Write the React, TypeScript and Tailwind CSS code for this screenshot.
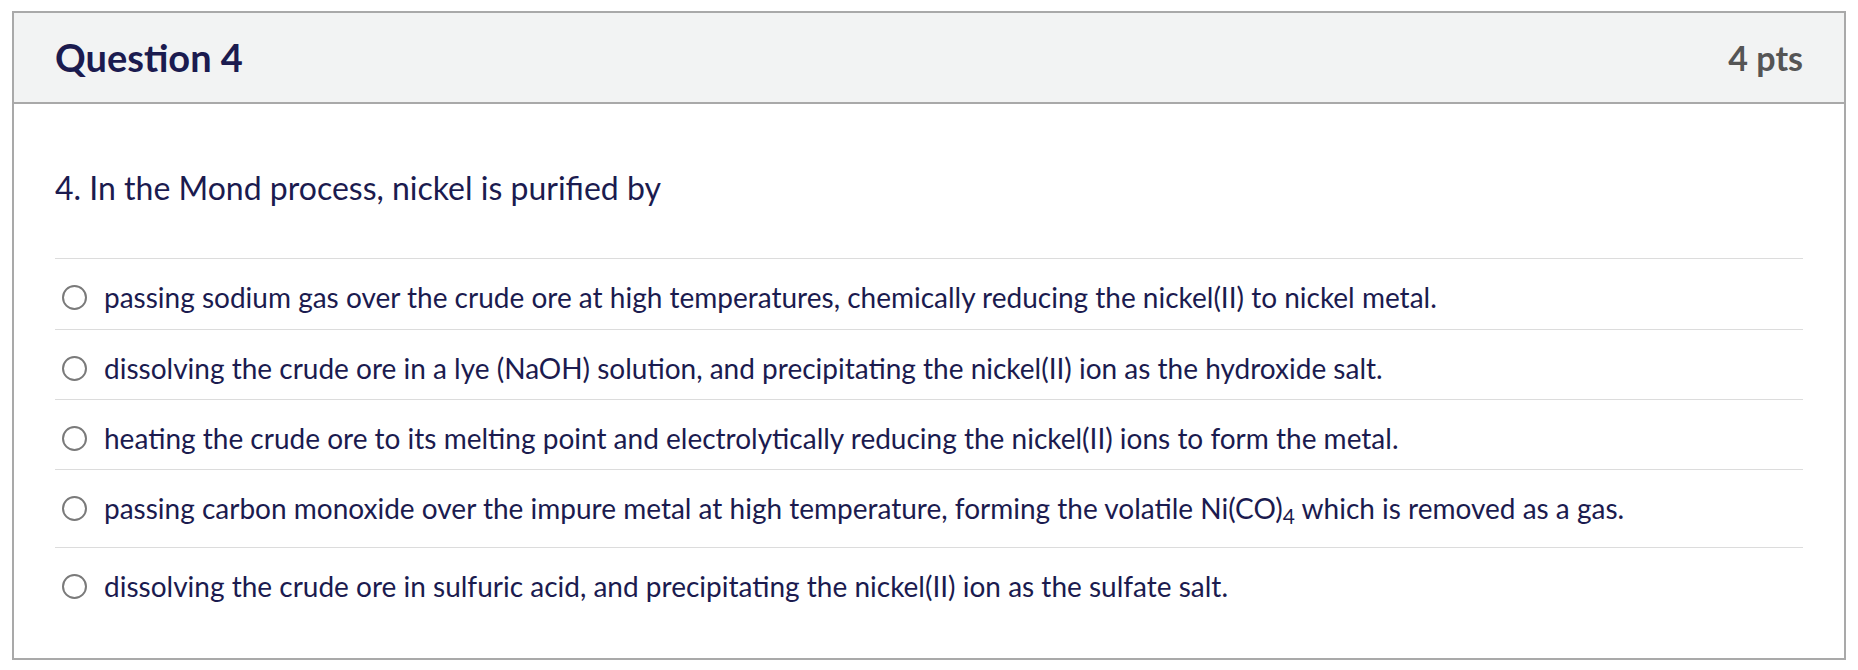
import React from 'react';

const options: React.ReactNode[] = [
  'passing sodium gas over the crude ore at high temperatures, chemically reducing the nickel(II) to nickel metal.',
  'dissolving the crude ore in a lye (NaOH) solution, and precipitating the nickel(II) ion as the hydroxide salt.',
  'heating the crude ore to its melting point and electrolytically reducing the nickel(II) ions to form the metal.',
  <>
    passing carbon monoxide over the impure metal at high temperature, forming the volatile Ni(CO)<sub className="text-[21px]">4</sub> which is removed as a gas.
  </>,
  'dissolving the crude ore in sulfuric acid, and precipitating the nickel(II) ion as the sulfate salt.',
];

export default function App() {
  return (
    <div className="min-h-screen bg-white pt-[11px] px-[12px]" style={{ fontFamily: 'Lato, "Noto Sans", sans-serif' }}>
      <div className="border-2 border-[#a9a9a9] bg-white">
        <div className="flex items-center justify-between h-[91px] px-[41px] bg-[#f2f3f3] border-b-2 border-[#a9a9a9]">
          <div className="text-[38px] font-bold text-[#1b1b4f]">Question 4</div>
          <div className="text-[34px] font-bold text-[#555555]">4 pts</div>
        </div>
        <div className="px-[41px] pt-[63px] pb-[41px]">
          <div className="text-[32px] leading-[42px] text-[#1b1b4f] mb-[49px]">
            4. In the Mond process, nickel is purified by
          </div>
          <div>
            {options.map((opt, i) => (
              <div
                key={i}
                className={`flex items-center border-t border-[#dcdcdc] pt-[20px] ${i === 3 ? 'pb-[21px]' : i === 0 ? 'pb-[14px]' : 'pb-[13px]'}`}
              >
                <span className="ml-[7px] mr-[17px] w-[25px] h-[25px] rounded-full border-2 border-[#7a7a7a] shrink-0" />
                <span className="text-[28px] leading-[36px] text-[#1b1b4f]">{opt}</span>
              </div>
            ))}
          </div>
        </div>
      </div>
    </div>
  );
}
